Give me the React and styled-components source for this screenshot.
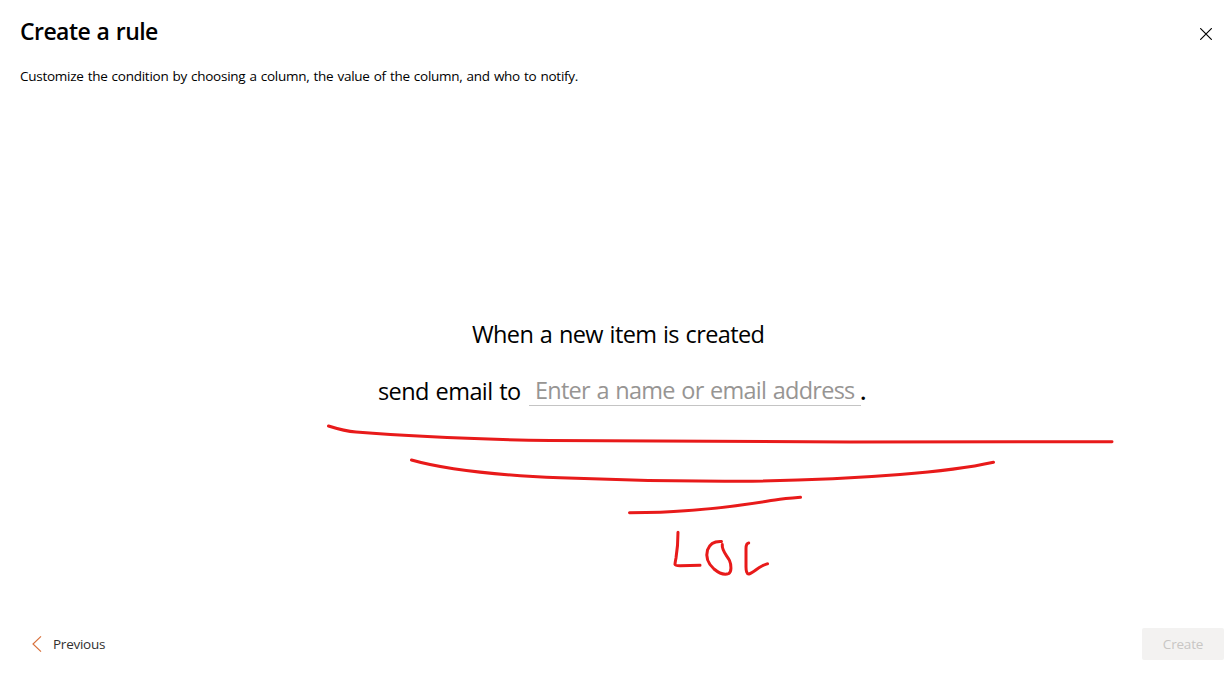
import React,{useState} from 'react';
import styled, { createGlobalStyle } from 'styled-components';

function App() {

    const [email,setEmail] = useState('');

    const onChangeHandler = (event)=>{
        setEmail(event.target.value);
    }

    return (
        <Container>
            <GlobalStyle />
            <Header>
                <Title>Create a rule</Title>
                <CloseButton aria-label='Close'>
                    <svg width='12' height='12' viewBox='0 0 12 12' fill='none' stroke='#000' strokeWidth='1.15'>
                        <path d='M0.2 0.2L11.8 11.8M11.8 0.2L0.2 11.8' />
                    </svg>
                </CloseButton>
            </Header>
            <Description>Customize the condition by choosing a column, the value of the column, and who to notify.</Description>

            <Main>
                <Sentence>When a new item is created</Sentence>
                <EmailRow>
                    <SendText>send email to</SendText>
                    <EmailInput placeholder='Enter a name or email address' name='email' value={email} onChange={onChangeHandler} />
                    <Period>.</Period>
                </EmailRow>
            </Main>

            <Footer>
                <PreviousButton>
                    <svg width='10' height='16' viewBox='0 0 10 16' fill='none' stroke='#d8703a' strokeWidth='1.15'>
                        <path d='M9 0.4L1 8L9 15.6' />
                    </svg>
                    <span>Previous</span>
                </PreviousButton>
                <CreateButton disabled>Create</CreateButton>
            </Footer>

            <Ink viewBox='0 0 1229 679'>
                <path d='M328.500 426C338 429 346 431.300 356 432.100C410 436.500 482 439.400 550 440.500C640 441.600 740 442 850 442L1112 441.700' />
                <path d='M411.500 460C450 471 505 475.500 560 477.800C620 480.300 690 481.400 740 481.200C790 480.800 850 478.500 900 474.500C935 471.800 965 468.600 993.500 462.300' />
                <path d='M629.500 512.700C650 512.600 670 512 685 510.700C720 508.700 745 504.500 775 500C783 498.800 792 498 800.500 497.300' />
                <path d='M678 532.300C678 543 677.500 549 676 558C675.400 561 675 563 675 564.500C675.300 565.700 677 565.700 680 565.700L700 565.300' />
                <path d='M721.500 541.600C714 541.100 709.500 544.500 707.500 550C705.200 558 709 564.500 714 569C719 573.200 724 575.200 728.500 573.700C731.700 572 731.500 565 729.500 560.500C727.500 556 721.500 551 722.300 544.500' />
                <path d='M748.700 542.900C746.500 543.200 746 545 746 548.500L746 567C746 570.500 746.800 574.400 749 574C753 573 757 568.400 762 566C764 565 765.500 564.500 767.500 563.800' />
            </Ink>
        </Container>
    )
}

export default App;

const GlobalStyle = createGlobalStyle`
body {
    margin: 0;
    background-color: #fff;
}
* {
    box-sizing: border-box;
}
button, input {
    font-family: inherit;
    border: 0;
    padding: 0;
    background: none;
}
`

const Container = styled.div`
position: relative;
display: flex;
flex-direction: column;
width: 1229px;
height: 679px;
overflow: hidden;
background-color: #fff;
color: #000;
font-family: 'Segoe UI', 'Open Sans', sans-serif;
`

const Header = styled.div`
display: flex;
justify-content: space-between;
align-items: flex-start;
height: 60px;
padding: 15px 17px 0 20px;
`

const Title = styled.h1`
margin: 0;
font-size: 23px;
line-height: 32px;
font-weight: 600;
letter-spacing: -0.55px;
word-spacing: 1px;
white-space: nowrap;
`

const CloseButton = styled.button`
display: flex;
margin-top: 13px;
`

const Description = styled.p`
margin: 0;
padding: 6px 20px 0;
font-size: 13.500px;
line-height: 20px;
letter-spacing: -0.26px;
word-spacing: 0.8px;
white-space: nowrap;
`

const Main = styled.div`
flex: 1;
display: flex;
flex-direction: column;
padding-top: 231px;
`

const Sentence = styled.div`
padding-left: 472px;
font-size: 23.500px;
line-height: 34px;
letter-spacing: -0.63px;
word-spacing: 1.2px;
white-space: nowrap;
`

const EmailRow = styled.div`
display: flex;
align-items: flex-start;
margin-top: 23px;
padding-left: 378px;
font-size: 23.500px;
line-height: 34px;
white-space: nowrap;
`

const SendText = styled.span`
width: 151px;
letter-spacing: -0.58px;
word-spacing: 1.2px;
`

const EmailInput = styled.input`
width: 332px;
height: 32px;
padding: 0 0 0 6px;
border-bottom: 1px solid #c4c4c4;
font-size: 23.500px;
letter-spacing: -0.75px;
word-spacing: 1.2px;
outline: none;
&::placeholder {
    color: #979593;
    opacity: 1;
}
`

const Period = styled.span`
font-weight: 600;
margin-left: -1px;
`

const Footer = styled.div`
display: flex;
justify-content: space-between;
align-items: center;
height: 32px;
margin-bottom: 19px;
padding: 0 5px 0 32px;
`

const PreviousButton = styled.button`
display: flex;
align-items: center;
gap: 11px;
color: #323130;
font-size: 13.500px;
line-height: 20px;
letter-spacing: -0.25px;
`

const CreateButton = styled.button`
width: 82px;
height: 32px;
border-radius: 2px;
background-color: #f3f2f1;
color: #c8c6c4;
font-size: 13.500px;
font-weight: 500;
letter-spacing: -0.2px;
`

// pen strokes drawn over the dialog
const Ink = styled.svg`
position: absolute;
left: 0;
top: 0;
width: 1229px;
height: 679px;
pointer-events: none;
fill: none;
stroke: #e81a1a;
stroke-width: 3;
stroke-linecap: round;
stroke-linejoin: round;
`
